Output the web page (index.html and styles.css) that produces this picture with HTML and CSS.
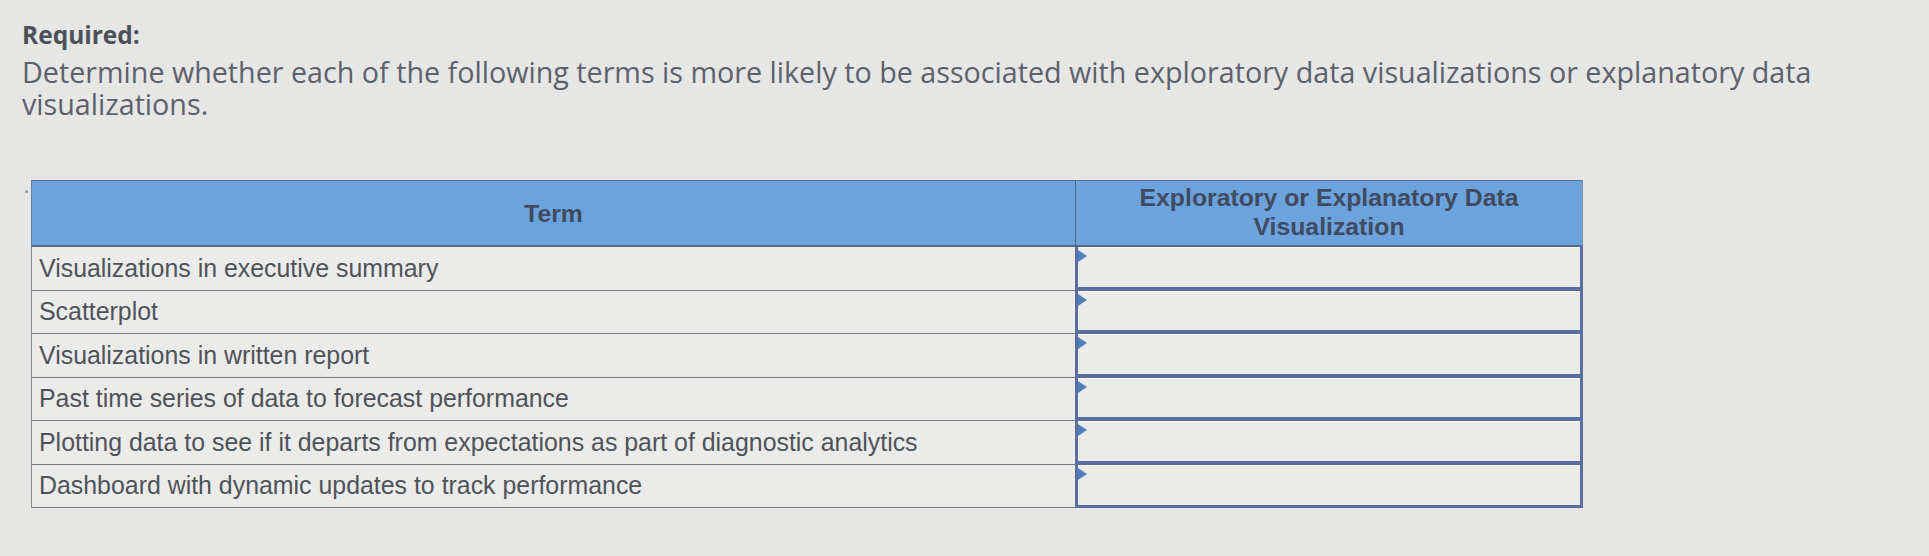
FILE: index.html
```html
<!DOCTYPE html>
<html>
<head>
<meta charset="utf-8">
<link rel="stylesheet" href="styles.css">
</head>
<body>
<div class="page">
  <div class="title">Required:</div>
  <p class="desc">Determine whether each of the following terms is more likely to be associated with exploratory data visualizations or explanatory data visualizations.</p>
  <div class="table-wrap">
    <span class="dot"></span>
    <table class="grid">
      <thead>
        <tr>
          <th class="h-term">Term</th>
          <th class="h-ans">Exploratory or Explanatory Data<br>Visualization</th>
        </tr>
      </thead>
      <tbody>
        <tr><td class="term">Visualizations in executive summary</td><td class="ans"><div class="sel"></div></td></tr>
        <tr><td class="term">Scatterplot</td><td class="ans"><div class="sel"></div></td></tr>
        <tr><td class="term">Visualizations in written report</td><td class="ans"><div class="sel"></div></td></tr>
        <tr><td class="term">Past time series of data to forecast performance</td><td class="ans"><div class="sel"></div></td></tr>
        <tr><td class="term">Plotting data to see if it departs from expectations as part of diagnostic analytics</td><td class="ans"><div class="sel"></div></td></tr>
        <tr><td class="term">Dashboard with dynamic updates to track performance</td><td class="ans"><div class="sel"></div></td></tr>
      </tbody>
    </table>
  </div>
</div>
</body>
</html>
```
FILE: styles.css
```css
html, body {
  margin: 0;
  padding: 0;
  background: #e6e6e4;
}
.page {
  padding: 19px 0 0 22px;
  font-family: "Open Sans", Lato, sans-serif;
  color: #5c616b;
}
.title {
  font-weight: 700;
  font-size: 24.5px;
  line-height: 32px;
  color: #4c5158;
}
.desc {
  margin: 5px 0 0;
  font-size: 28.7px;
  line-height: 32px;
  max-width: 1890px;
}
.table-wrap {
  position: relative;
  margin: 60px 0 0 9px;
}
.dot {
  position: absolute;
  left: -6px;
  top: 10px;
  width: 3px;
  height: 3px;
  background: #9a9a98;
  border-radius: 50%;
}
.grid {
  border-collapse: separate;
  border-spacing: 0;
  font-family: "Liberation Sans", Arial, sans-serif;
}
.grid th {
  background: #6da3dd;
  color: #3e4b60;
  font-weight: 700;
  font-size: 24.8px;
  line-height: 29px;
  height: 62px;
  padding: 0;
  text-align: center;
  border-top: 1px solid #5c7290;
  border-bottom: 2px solid #56698a;
}
.h-term {
  width: 1043px;
  border-left: 1px solid #6a7c96;
}
.h-ans {
  width: 506px;
  border-left: 1px solid #566680;
  border-right: 1px solid #7d8fa8;
  vertical-align: top;
  padding-top: 2px !important;
}
.term {
  height: 42.5px;
  padding: 0 0 0 7px;
  font-size: 24.9px;
  color: #4f5359;
  background: #ebebea;
  border-left: 1px solid #8a8a8a;
  border-bottom: 1px solid #7e7e7e;
  white-space: nowrap;
}
.ans {
  padding: 0;
  height: 39.5px;
  background: #ebebea;
  border-left: 3px solid #5a6f9f;
  border-right: 3px solid #5a6f9f;
  border-bottom: 4px solid #5a6f9f;
}
tbody tr:last-child .ans {
  border-bottom-width: 3px;
}
.sel {
  position: relative;
  height: 100%;
  min-height: 39px;
  box-shadow: inset 0 1px 0 #f6f6f5;
}
.sel::before {
  content: "";
  position: absolute;
  left: 0;
  top: 3px;
  border-top: 6px solid transparent;
  border-bottom: 6px solid transparent;
  border-left: 9px solid #4f7fbd;
}
```
